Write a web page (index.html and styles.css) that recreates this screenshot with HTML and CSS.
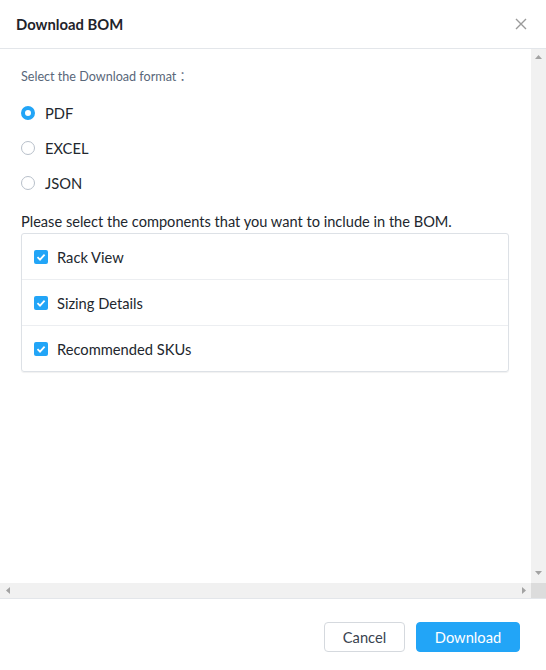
FILE: index.html
```html
<!DOCTYPE html>
<html>
<head>
<meta charset="utf-8">
<link rel="stylesheet" href="styles.css">
</head>
<body>
<div class="modal">
  <div class="header">
    <div class="title">Download BOM</div>
    <svg class="close" width="12" height="12" viewBox="0 0 12 12"><path d="M1 1L11 11M11 1L1 11" stroke="#9a9a9a" stroke-width="1.4" fill="none"/></svg>
  </div>
  <div class="body">
    <div class="content">
      <div class="label">Select the Download format：</div>
      <div class="radios">
        <div class="radio-row"><span class="radio checked"></span><span>PDF</span></div>
        <div class="radio-row"><span class="radio"></span><span>EXCEL</span></div>
        <div class="radio-row"><span class="radio"></span><span>JSON</span></div>
      </div>
      <div class="prompt">Please select the components that you want to include in the BOM.</div>
      <div class="list">
        <div class="item"><span class="check"><svg width="14" height="14" viewBox="0 0 14 14"><path d="M3.5 7.2L6 9.6L10.6 4.6" stroke="#fff" stroke-width="1.8" fill="none"/></svg></span><span>Rack View</span></div>
        <div class="item"><span class="check"><svg width="14" height="14" viewBox="0 0 14 14"><path d="M3.5 7.2L6 9.6L10.6 4.6" stroke="#fff" stroke-width="1.8" fill="none"/></svg></span><span>Sizing Details</span></div>
        <div class="item"><span class="check"><svg width="14" height="14" viewBox="0 0 14 14"><path d="M3.5 7.2L6 9.6L10.6 4.6" stroke="#fff" stroke-width="1.8" fill="none"/></svg></span><span>Recommended SKUs</span></div>
      </div>
    </div>
    <div class="vbar">
      <div class="sb-btn up"><svg width="7" height="4" viewBox="0 0 7 4"><path d="M0 4L3.5 0L7 4Z" fill="#a3a3a3"/></svg></div>
      <div class="sb-btn down"><svg width="7" height="4" viewBox="0 0 7 4"><path d="M0 0L3.5 4L7 0Z" fill="#a3a3a3"/></svg></div>
    </div>
    <div class="hbar">
      <div class="sb-btn left"><svg width="4" height="7" viewBox="0 0 4 7"><path d="M4 0L0 3.5L4 7Z" fill="#a3a3a3"/></svg></div>
      <div class="sb-btn right"><svg width="4" height="7" viewBox="0 0 4 7"><path d="M0 0L4 3.5L0 7Z" fill="#a3a3a3"/></svg></div>
    </div>
    <div class="corner"></div>
  </div>
  <div class="footer">
    <button class="btn cancel">Cancel</button>
    <button class="btn primary">Download</button>
  </div>
</div>
</body>
</html>
```
FILE: styles.css
```css
html, body {
  margin: 0;
  padding: 0;
  background: #fff;
}
body {
  font-family: "Lato", "Liberation Sans", "Noto Sans CJK JP", sans-serif;
  color: #22272e;
}
.modal {
  width: 546px;
  height: 670px;
  display: flex;
  flex-direction: column;
}
.header {
  height: 48px;
  border-bottom: 1px solid #e3e6ea;
  display: flex;
  align-items: center;
  justify-content: space-between;
  padding: 0 19px 0 16px;
  flex: none;
}
.title {
  font-size: 14.8px;
  font-weight: 700;
  color: #1f242b;
}
.close {
  display: block;
}
.body {
  height: 550px;
  box-sizing: border-box;
  flex: none;
  border-bottom: 1px solid #e3e6ea;
  display: grid;
  grid-template-columns: 1fr 15px;
  grid-template-rows: 1fr 15px;
}
.content {
  padding: 20px 22px 0 21px;
  min-width: 0;
}
.label {
  font-size: 12.6px;
  color: #59677a;
  line-height: 16px;
}
.radios {
  margin-top: 10px;
  display: flex;
  flex-direction: column;
}
.radio-row {
  height: 35px;
  display: flex;
  align-items: center;
  font-size: 14.7px;
  gap: 10px;
  color: #22272e;
}
.radio {
  width: 14px;
  height: 14px;
  border-radius: 50%;
  border: 1px solid #b8c0ca;
  box-sizing: border-box;
  background: #fff;
}
.radio.checked {
  border: 4px solid #22a5f7;
  background: #fff;
}
.prompt {
  margin-top: 12px;
  font-size: 14.6px;
  line-height: 20px;
  color: #22272e;
}
.list {
  margin-top: 1px;
  border: 1px solid #dde1e6;
  border-radius: 3px;
  box-shadow: 0 1px 1px rgba(0,0,0,0.06);
}
.item {
  height: 46px;
  display: flex;
  align-items: center;
  padding-left: 12px;
  gap: 9px;
  font-size: 14.7px;
  border-top: 1px solid #eceef1;
  box-sizing: border-box;
}
.item:first-child {
  border-top: none;
  height: 45px;
}
.check {
  width: 14px;
  height: 14px;
  background: #22a5f7;
  border-radius: 2px;
  display: block;
}
.check svg {
  display: block;
}
.vbar {
  background: #f1f1f1;
  display: flex;
  flex-direction: column;
  justify-content: space-between;
}
.hbar {
  background: #f1f1f1;
  display: flex;
  justify-content: space-between;
}
.corner {
  background: #dcdcdc;
}
.sb-btn {
  width: 15px;
  height: 15px;
  display: flex;
  align-items: center;
  justify-content: center;
}
.sb-btn.down {
  align-items: flex-start;
  padding-top: 3px;
  box-sizing: border-box;
}
.sb-btn svg {
  display: block;
}
.footer {
  flex: 1;
  display: flex;
  justify-content: flex-end;
  align-items: flex-start;
  padding: 23px 26px 0 0;
  gap: 11px;
}
.btn {
  height: 30px;
  border-radius: 4px;
  font-family: inherit;
  font-size: 14.7px;
  cursor: pointer;
}
.cancel {
  width: 81px;
  background: #fff;
  border: 1px solid #d5d9de;
  color: #3a4350;
}
.primary {
  width: 104px;
  background: #22a5f7;
  border: 1px solid #22a5f7;
  color: #fff;
}
```
